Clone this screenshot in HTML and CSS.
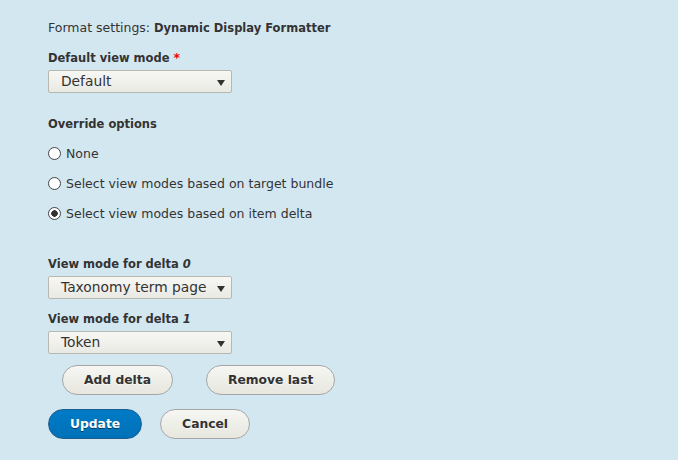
FILE: index.html
```html
<!DOCTYPE html>
<html lang="en">
<head>
    <meta charset="UTF-8">
    <title>Format settings</title>
    <link rel="stylesheet" href="styles.css">
</head>
<body>
    <div class="settings">
        <div class="settings-title">Format settings: <strong>Dynamic Display Formatter</strong></div>

        <div class="form-item">
            <label class="form-label">Default view mode <span class="required">*</span></label>
            <div class="select">Default</div>
        </div>

        <div class="form-item radios">
            <div class="form-label">Override options</div>
            <label class="radio"><span class="radio-dot"></span>None</label>
            <label class="radio"><span class="radio-dot"></span>Select view modes based on target bundle</label>
            <label class="radio"><span class="radio-dot checked"></span>Select view modes based on item delta</label>
        </div>

        <div class="deltas">
            <div class="form-item">
                <label class="form-label">View mode for delta <em>0</em></label>
                <div class="select">Taxonomy term page</div>
            </div>
            <div class="form-item">
                <label class="form-label">View mode for delta <em>1</em></label>
                <div class="select">Token</div>
            </div>
        </div>

        <div class="delta-actions">
            <button class="button">Add delta</button>
            <button class="button">Remove last</button>
        </div>

        <div class="form-actions">
            <button class="button button-primary">Update</button>
            <button class="button">Cancel</button>
        </div>
    </div>
</body>
</html>
```

FILE: styles.css
```css
body {
    margin: 0;
    background: #d3e7f1;
    font-family: 'DejaVu Sans', sans-serif;
    font-size: 12.5px;
    color: #333;
}

.settings {
    padding: 20px 48px;
}

.settings-title {
    line-height: 16px;
    margin-bottom: 14px;
}
.settings-title strong {
    font-size: 11.5px;
    font-weight: bold;
}

.form-item {
    margin-bottom: 12px;
}

.form-label {
    display: block;
    height: 16px;
    font-size: 11.5px;
    font-weight: bold;
    line-height: 16px;
    margin-bottom: 4px;
}
.form-label em {
    font-style: italic;
}
.required {
    color: #e00;
    font-size: 12.5px;
}

.select {
    position: relative;
    box-sizing: border-box;
    width: 184px;
    height: 23px;
    line-height: 21px;
    padding: 0 8px 0 12px;
    border: 1px solid #b8b8b0;
    border-radius: 2px;
    background: linear-gradient(#f7f7f4, #e9e9e4);
    font-size: 13.8px;
    white-space: nowrap;
}
.select::after {
    content: "";
    position: absolute;
    right: 6px;
    top: 9px;
    border-left: 4px solid transparent;
    border-right: 4px solid transparent;
    border-top: 6px solid #333;
}

.radios {
    margin-top: 23px;
}
.radios .form-label {
    margin-bottom: 6px;
}
.radio {
    display: flex;
    align-items: center;
    height: 30px;
}
.radio-dot {
    box-sizing: border-box;
    width: 13px;
    height: 13px;
    margin-right: 5px;
    border: 1px solid #444;
    border-radius: 50%;
    background: #fff;
}
.radio-dot.checked {
    background: radial-gradient(circle, #333 3px, #fff 3.5px);
}

.deltas {
    margin-top: 28px;
}
.deltas .form-item:last-child {
    margin-bottom: 0;
}

.delta-actions {
    display: flex;
    gap: 33px;
    padding-left: 14px;
    margin-top: 11px;
}

.form-actions {
    display: flex;
    gap: 18px;
    margin-top: 14px;
}

.button {
    height: 30px;
    padding: 0 21px;
    border: 1px solid #a6a6a6;
    border-radius: 20px;
    background: linear-gradient(#f6f6f3, #e7e7df);
    font-family: 'DejaVu Sans', sans-serif;
    font-size: 12.3px;
    font-weight: bold;
    color: #333;
    text-shadow: 0 1px rgba(255, 255, 255, 0.6);
}
.button-primary {
    border-color: #1e5c90;
    background: linear-gradient(#007bc6, #0071b8);
    color: #fff;
    text-shadow: 0 1px rgba(0, 0, 0, 0.5);
}
```
